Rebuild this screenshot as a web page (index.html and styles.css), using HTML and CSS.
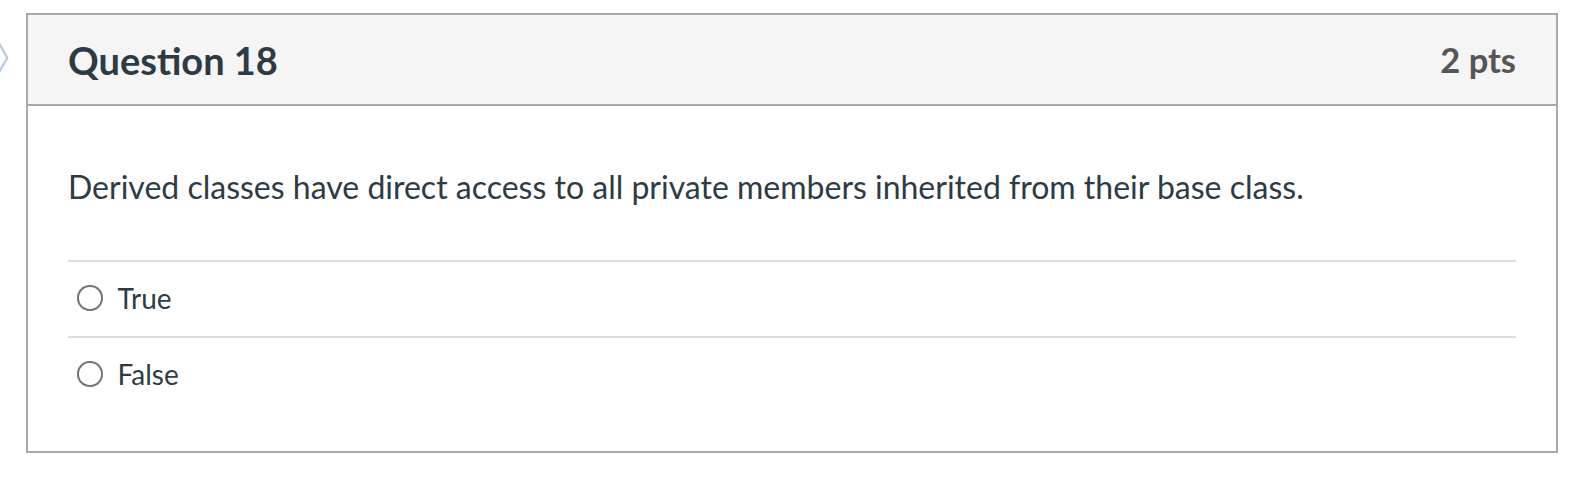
FILE: index.html
```html
<!DOCTYPE html>
<html lang="en">
<head>
<meta charset="utf-8">
<title>Question 18</title>
<link rel="stylesheet" href="styles.css">
</head>
<body>
<div class="page">
  <svg class="flag" width="12" height="36" viewBox="0 0 12 36" aria-hidden="true">
    <polyline points="-1.5,1 7.3,16.7 -1.5,32.4" fill="none" stroke="#b3cadf" stroke-width="2.2" stroke-linejoin="round"/>
  </svg>
  <div class="question">
    <div class="header">
      <h2 class="title">Question 18</h2>
      <div class="pts">2 pts</div>
    </div>
    <div class="content">
      <p class="text">Derived classes have direct access to all private members inherited from their base class.</p>
      <div class="answers">
        <label class="answer"><span class="radio"></span><span class="label">True</span></label>
        <label class="answer"><span class="radio"></span><span class="label">False</span></label>
      </div>
    </div>
  </div>
</div>
</body>
</html>
```

FILE: styles.css
```css
html, body {
  margin: 0;
  padding: 0;
  background: #ffffff;
}
body {
  font-family: Lato, "Open Sans", "Liberation Sans", sans-serif;
  color: #2d3b45;
}
.page {
  position: relative;
  padding: 13px 0 0 26px;
}
.flag {
  position: absolute;
  left: 0;
  top: 41px;
}
.question {
  width: 1528px;
  border: 2px solid #a9a9a9;
  background: #ffffff;
}
.header {
  display: flex;
  align-items: center;
  justify-content: space-between;
  height: 89px;
  padding: 0 40px 0 40px;
  background: #f5f5f5;
  border-bottom: 2px solid #a9a9a9;
}
.title {
  margin: 0;
  font-size: 38px;
  font-weight: 700;
  color: #2d3b45;
}
.pts {
  font-size: 34.5px;
  font-weight: 700;
  color: #565656;
}
.content {
  padding: 57px 40px 39px 40px;
}
.text {
  margin: 0 0 49px 0;
  font-size: 32px;
  line-height: 48px;
}
.answer {
  display: flex;
  align-items: center;
  height: 74px;
  border-top: 2px solid #dddddd;
  padding-left: 9px;
  padding-bottom: 2px;
  box-sizing: border-box;
  height: 76px;
}
.radio {
  box-sizing: border-box;
  width: 25.5px;
  height: 25.5px;
  border: 2px solid #747474;
  border-radius: 50%;
  margin-right: 15px;
  flex: none;
}
.label {
  font-size: 28px;
  color: #2d3b45;
}
```
